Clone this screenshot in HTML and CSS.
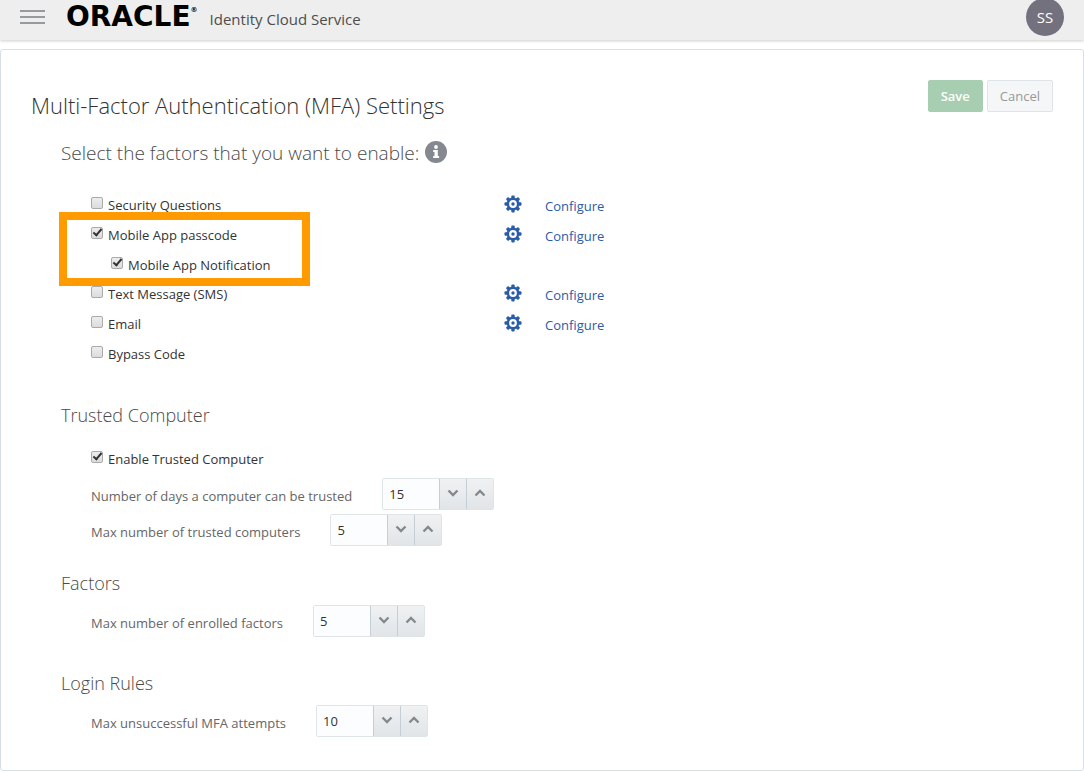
FILE: index.html
```html
<!DOCTYPE html>
<html lang="en">
<head>
<meta charset="utf-8">
<meta name="viewport" content="width=device-width, initial-scale=1">
<title>Identity Cloud Service</title>
<link rel="stylesheet" href="styles.css">
</head>
<body>
<svg class="defs" aria-hidden="true">
  <symbol id="gear" viewBox="0 0 18 18">
    <g fill="#2a5caa">
      <rect x="7.3" y="0.5" width="3.4" height="17" rx="1"/>
      <rect x="7.3" y="0.5" width="3.4" height="17" rx="1" transform="rotate(45 9 9)"/>
      <rect x="7.3" y="0.5" width="3.4" height="17" rx="1" transform="rotate(90 9 9)"/>
      <rect x="7.3" y="0.5" width="3.4" height="17" rx="1" transform="rotate(135 9 9)"/>
      <circle cx="9" cy="9" r="6.4"/>
    </g>
    <circle cx="9" cy="9" r="3.9" fill="#fff"/>
    <circle cx="9" cy="9" r="1.7" fill="#2a5caa"/>
  </symbol>
  <symbol id="down" viewBox="0 0 12 8"><path d="M1.5 1.5 6 6l4.5-4.5" fill="none" stroke="#84898e" stroke-width="2.4"/></symbol>
  <symbol id="up" viewBox="0 0 12 8"><path d="M1.5 6.5 6 2l4.5 4.5" fill="none" stroke="#84898e" stroke-width="2.4"/></symbol>
</svg>

<header class="topbar">
  <button class="menu" type="button" aria-label="Menu"><span></span><span></span><span></span></button>
  <span class="logo">ORACLE<sup>®</sup></span>
  <span class="product">Identity Cloud Service</span>
  <button class="avatar" type="button">SS</button>
</header>

<main class="card">
  <div class="title-row">
    <h1>Multi-Factor Authentication (MFA) Settings</h1>
    <div class="actions">
      <button class="btn save" type="button">Save</button>
      <button class="btn cancel" type="button">Cancel</button>
    </div>
  </div>

  <section class="factors">
    <h2>Select the factors that you want to enable:
      <svg class="info" viewBox="0 0 22 22" role="img" aria-label="Information">
        <circle cx="11" cy="11" r="11" fill="#84898f"/>
        <circle cx="11" cy="6" r="1.9" fill="#fff"/>
        <path d="M8.2 9h4.6v6h1.3v2H8.2v-2h1.3v-4H8.2z" fill="#fff"/>
      </svg>
    </h2>
    <div class="factor">
      <label class="check"><input type="checkbox">Security Questions</label>
      <svg class="gear"><use href="#gear"/></svg>
      <a href="#">Configure</a>
    </div>
    <div class="highlighted">
      <div class="factor">
        <label class="check"><input type="checkbox" checked>Mobile App passcode</label>
        <svg class="gear"><use href="#gear"/></svg>
        <a href="#">Configure</a>
      </div>
      <div class="factor nested">
        <label class="check"><input type="checkbox" checked>Mobile App Notification</label>
      </div>
    </div>
    <div class="factor">
      <label class="check"><input type="checkbox">Text Message (SMS)</label>
      <svg class="gear"><use href="#gear"/></svg>
      <a href="#">Configure</a>
    </div>
    <div class="factor">
      <label class="check"><input type="checkbox">Email</label>
      <svg class="gear"><use href="#gear"/></svg>
      <a href="#">Configure</a>
    </div>
    <div class="factor">
      <label class="check"><input type="checkbox">Bypass Code</label>
    </div>
  </section>

  <section class="trusted">
    <h2>Trusted Computer</h2>
    <label class="check"><input type="checkbox" checked>Enable Trusted Computer</label>
    <div class="field">
      <label for="days">Number of days a computer can be trusted</label>
      <div class="spinner">
        <input id="days" type="text" inputmode="numeric" value="15">
        <button type="button" aria-label="Decrease"><svg><use href="#down"/></svg></button>
        <button type="button" aria-label="Increase"><svg><use href="#up"/></svg></button>
      </div>
    </div>
    <div class="field">
      <label for="computers">Max number of trusted computers</label>
      <div class="spinner">
        <input id="computers" type="text" inputmode="numeric" value="5">
        <button type="button" aria-label="Decrease"><svg><use href="#down"/></svg></button>
        <button type="button" aria-label="Increase"><svg><use href="#up"/></svg></button>
      </div>
    </div>
  </section>

  <section class="limits">
    <h2>Factors</h2>
    <div class="field">
      <label for="enrolled">Max number of enrolled factors</label>
      <div class="spinner">
        <input id="enrolled" type="text" inputmode="numeric" value="5">
        <button type="button" aria-label="Decrease"><svg><use href="#down"/></svg></button>
        <button type="button" aria-label="Increase"><svg><use href="#up"/></svg></button>
      </div>
    </div>
  </section>

  <section class="login">
    <h2>Login Rules</h2>
    <div class="field">
      <label for="attempts">Max unsuccessful MFA attempts</label>
      <div class="spinner">
        <input id="attempts" type="text" inputmode="numeric" value="10">
        <button type="button" aria-label="Decrease"><svg><use href="#down"/></svg></button>
        <button type="button" aria-label="Increase"><svg><use href="#up"/></svg></button>
      </div>
    </div>
  </section>
</main>
</body>
</html>
```
FILE: styles.css
```css
*, *::before, *::after { box-sizing: border-box; }

body {
  margin: 0;
  background: #fff;
  color: #333;
  font: 13px/20px "Segoe UI", "Open Sans", "Noto Sans", sans-serif;
}

button, input { font: inherit; margin: 0; }
h1, h2 { margin: 0; font-weight: 300; }
.defs { display: none; }

.topbar {
  display: flex;
  align-items: center;
  height: 40px;
  padding: 0 20px;
  background: #eee;
  box-shadow: 0 1px 3px rgba(0, 0, 0, .2);
}

.menu {
  display: grid;
  gap: 4px;
  width: 25px;
  padding: 0;
  margin-bottom: 6px;
  border: 0;
  background: none;
}
.menu span { height: 2px; background: #96999e; }

.logo {
  margin: 0 12px 6px 21px;
  color: #000;
  font: bold 28px/32px "DejaVu Sans", sans-serif;
}
.logo sup { font-size: 7px; line-height: 8px; vertical-align: 14px; }

.product { font-size: 15px; color: #4d4d4d; margin-bottom: 3px; }

.avatar {
  width: 38px;
  height: 38px;
  margin: 0 0 6px auto;
  padding: 0;
  border: 0;
  border-radius: 50%;
  background: #72717d;
  color: #fff;
  font-size: 15px;
}

.card {
  margin-top: 9px;
  padding: 30px 30px 29px;
  border: 1px solid #d6dfe6;
  border-radius: 3px;
}

.title-row { display: flex; justify-content: space-between; align-items: flex-start; }
h1 { padding-top: 8px; font-size: 22px; line-height: 34px; }

.actions { display: flex; gap: 4px; }
.btn {
  height: 32px;
  padding: 0 12px;
  border: 1px solid #dfe4e7;
  border-radius: 2px;
}
.save { border-color: #a7ceb0; background: #a7ceb0; color: #fff; font-weight: 600; }
.cancel { background: #f4f6f8; color: #999; }

section { padding-left: 30px; }
h2 {
  display: flex;
  align-items: center;
  font-size: 18px;
  line-height: 28px;
  color: #4a4a4a;
}
.info { width: 22px; height: 22px; margin-bottom: 3px; }

.factors { padding-top: 17px; }
.factors h2 { gap: 6px; margin-bottom: 23px; font-size: 19px; }

.factor {
  display: grid;
  grid-template-columns: 390px 18px auto;
  column-gap: 23px;
  justify-content: start;
  align-items: start;
  height: 30px;
  padding: 5px 0 0 30px;
}
.factor.nested { padding-left: 50px; }
.factor .gear { width: 18px; height: 18px; }
.factor a { padding-top: 1px; color: #2a5caa; text-decoration: none; }

.highlighted { position: relative; height: 59px; }
.highlighted::after {
  content: "";
  position: absolute;
  top: -8px;
  left: -2px;
  width: 251px;
  height: 74px;
  border: 8px solid #ff9a00;
  pointer-events: none;
}

.check { display: flex; align-items: flex-start; gap: 5px; }
.check input {
  appearance: none;
  flex: none;
  width: 12px;
  height: 12px;
  margin-top: 2px;
  border: 1px solid #aaa;
  border-radius: 2px;
  background: linear-gradient(#ededed, #dcdcdc);
}
.check input:checked::before {
  content: "";
  display: block;
  width: 5px;
  height: 9px;
  margin: -1px 0 0 3px;
  border: solid #333;
  border-width: 0 2px 2px 0;
  transform: rotate(40deg);
}

.trusted { padding-top: 32px; }
.trusted .check { padding-left: 30px; margin: 20px 0 9px; }

.field {
  display: flex;
  align-items: center;
  gap: 30px;
  padding-left: 30px;
  margin-bottom: 4px;
  color: #666;
}
.field label { padding-top: 4px; }

.spinner {
  display: flex;
  width: 112px;
  height: 32px;
  border: 1px solid #dfe4e7;
  border-radius: 2px;
}
.spinner input {
  flex: 1;
  min-width: 0;
  padding: 0 6px;
  border: 0;
  background: #fcfdfe;
  color: #333;
}
.spinner button {
  display: grid;
  place-items: center;
  width: 27px;
  padding: 0 0 2px;
  border: 0;
  border-left: 1px solid #c4ced7;
  background: linear-gradient(#f0f1f2, #e1e5e8);
}
.spinner svg { width: 12px; height: 8px; }

.limits { padding-top: 19px; }
.limits h2, .login h2 { margin-bottom: 8px; }
.login { padding-top: 28px; }
```
